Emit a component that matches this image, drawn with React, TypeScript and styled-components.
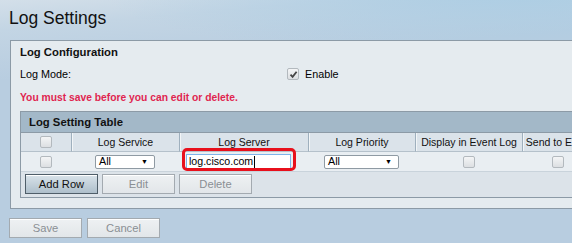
import React from 'react';
import styled, { createGlobalStyle } from 'styled-components';

const GlobalStyle = createGlobalStyle`
  html, body {
    margin: 0;
    padding: 0;
    overflow: hidden;
  }
  body {
    font-family: "Liberation Sans", Arial, sans-serif;
    color: #000;
    background: #b8cde0;
  }
`;

const Page = styled.div`
  width: 572px;
  height: 243px;
  overflow: hidden;
  background:
    radial-gradient(ellipse 420px 70px at 520px -10px, rgba(170, 205, 228, 0.9), rgba(170, 205, 228, 0) 100%),
    linear-gradient(175deg, #d3dfe9 0px, #c3d5e4 30px, #b8cde0 80px, #b8cde0 100%);
`;

const Title = styled.h1`
  margin: 0;
  padding: 6px 0 0 9px;
  height: 40px;
  box-sizing: border-box;
  font-size: 17.5px;
  font-weight: normal;
  line-height: 24px;
  color: #111;
`;

const Panel = styled.section`
  margin-left: 10px;
  width: 620px;
  border: 1px solid #8c9aa6;
  border-right: none;
  background: #e5ebef;
  padding: 0 0 10px 9px;
`;

const SectionTitle = styled.div`
  height: 21px;
  line-height: 22px;
  font-size: 11.3px;
  font-weight: bold;
  color: #111;
`;

const FieldRow = styled.div`
  display: flex;
  align-items: center;
  height: 24px;
  font-size: 10.8px;
`;

const FieldLabel = styled.span`
  width: 267px;
`;

const Check = styled.span`
  display: inline-block;
  position: relative;
  width: 10px;
  height: 10px;
  border: 1px solid #b3b9be;
  border-radius: 2px;
  background: linear-gradient(#f4f5f6, #dcdfe2);
  box-sizing: content-box;
  vertical-align: middle;
`;

const CheckMark = styled.svg`
  position: absolute;
  left: 1px;
  top: 1px;
`;

const CheckLabel = styled.span`
  margin-left: 6px;
`;

const Warning = styled.div`
  height: 24px;
  line-height: 24px;
  font-size: 10.3px;
  font-weight: bold;
  color: #e0254f;
  margin-bottom: 1px;
`;

const TablePanel = styled.div`
  border: 1px solid #8c9aa6;
  border-right: none;
  background: #dde4ea;
`;

const TableTitle = styled.div`
  height: 20px;
  line-height: 21px;
  padding-left: 8px;
  background: #a3b8c8;
  font-size: 11.3px;
  font-weight: bold;
  color: #111;
  border-bottom: 1px solid #8c9aa6;
`;

const Grid = styled.div`
  display: grid;
  grid-template-columns: 50px 108px 129px 107px 107px 72px;
`;

const HeadCell = styled.div<{ $first?: boolean }>`
  height: 18px;
  font-size: 10.5px;
  white-space: nowrap;
  overflow: hidden;
  background: #dbe3ea;
  border-bottom: 1px solid #b5c1cb;
  border-left: ${(p) => (p.$first ? 'none' : '1px solid #9fb0be')};
  box-shadow: ${(p) => (p.$first ? 'none' : 'inset 1px 0 0 #f2f5f7')};
  display: flex;
  align-items: center;
  justify-content: center;
  color: #111;
`;

const Cell = styled.div`
  height: 19px;
  background: #e9eef2;
  border-bottom: 1px solid #c9d3db;
  display: flex;
  align-items: center;
  justify-content: center;
  position: relative;
`;

const Select = styled.div<{ $w: number }>`
  width: ${(p) => p.$w}px;
  height: 14px;
  box-sizing: border-box;
  border: 1px solid #8f9aa3;
  border-radius: 2px;
  background: #fff;
  font-size: 10.8px;
  line-height: 13px;
  padding: 0 6px 0 3px;
  display: flex;
  justify-content: space-between;
  align-items: center;
`;

const Arrow = styled.span`
  font-size: 7px;
`;

const Highlight = styled.div`
  position: absolute;
  left: 3px;
  top: -4px;
  width: 108px;
  height: 17px;
  border: 3px solid #e8101c;
  border-radius: 5px;
  pointer-events: none;
`;

const TextInput = styled.div`
  width: 105px;
  height: 15px;
  box-sizing: border-box;
  margin-left: -10px;
  border: 1px solid #7eb4ea;
  background: #fff;
  font-size: 10.6px;
  line-height: 13px;
  padding-left: 2px;
  display: flex;
  align-items: center;
`;

const Caret = styled.span`
  display: inline-block;
  width: 1px;
  height: 12px;
  background: #000;
  margin-left: 1px;
`;

const ButtonRow = styled.div`
  display: flex;
  gap: 4px;
  padding: 2px 0 3px 4px;
  background: #dce3e9;
`;

const Button = styled.button<{ $primary?: boolean }>`
  width: 73px;
  height: 20px;
  padding: 0;
  font-family: "Liberation Sans", Arial, sans-serif;
  font-size: 11.2px;
  color: ${(p) => (p.$primary ? '#111' : '#8a8f94')};
  border: 1px solid ${(p) => (p.$primary ? '#4f5e69' : '#a3aab0')};
  background: ${(p) =>
    p.$primary
      ? 'linear-gradient(#d9e3ea, #aebfcb)'
      : 'linear-gradient(#eef1f3, #e2e6e9)'};
  box-shadow: inset 0 1px 0 #fff;
`;

const Footer = styled.div`
  display: flex;
  gap: 5px;
  padding: 9px 0 0 9px;
`;

const Box = ({ checked }: { checked?: boolean }) => (
  <Check>
    {checked && (
      <CheckMark width="9" height="9" viewBox="0 0 9 9">
        <path d="M1.5 4.6 L3.6 6.8 L7.6 1.8" stroke="#444" strokeWidth="1.8" fill="none" />
      </CheckMark>
    )}
  </Check>
);

export default function App() {
  return (
    <Page>
      <GlobalStyle />
      <Title>Log Settings</Title>
      <Panel>
        <SectionTitle>Log Configuration</SectionTitle>
        <FieldRow>
          <FieldLabel>Log Mode:</FieldLabel>
          <Box checked />
          <CheckLabel>Enable</CheckLabel>
        </FieldRow>
        <Warning>You must save before you can edit or delete.</Warning>
        <TablePanel>
          <TableTitle>Log Setting Table</TableTitle>
          <Grid>
            <HeadCell $first>
              <Box />
            </HeadCell>
            <HeadCell>Log Service</HeadCell>
            <HeadCell>Log Server</HeadCell>
            <HeadCell>Log Priority</HeadCell>
            <HeadCell>Display in Event Log</HeadCell>
            <HeadCell>Send to Email</HeadCell>

            <Cell>
              <Box />
            </Cell>
            <Cell>
              <Select $w={60}>
                All<Arrow>▼</Arrow>
              </Select>
            </Cell>
            <Cell>
              <Highlight />
              <TextInput>
                log.cisco.com<Caret />
              </TextInput>
            </Cell>
            <Cell>
              <Select $w={75}>
                All<Arrow>▼</Arrow>
              </Select>
            </Cell>
            <Cell>
              <Box />
            </Cell>
            <Cell>
              <Box />
            </Cell>
          </Grid>
          <ButtonRow>
            <Button $primary>Add Row</Button>
            <Button>Edit</Button>
            <Button>Delete</Button>
          </ButtonRow>
        </TablePanel>
      </Panel>
      <Footer>
        <Button>Save</Button>
        <Button>Cancel</Button>
      </Footer>
    </Page>
  );
}
